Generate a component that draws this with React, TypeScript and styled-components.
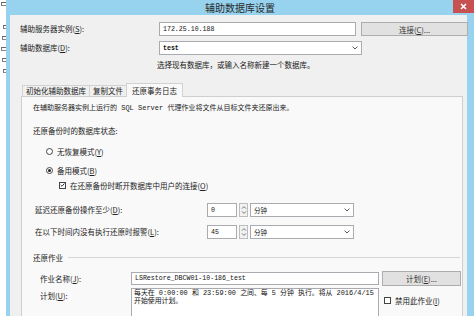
import React from 'react';
import styled, { createGlobalStyle } from 'styled-components';

const GlobalStyle = createGlobalStyle`
  html, body { margin: 0; padding: 0; }
  body {
    background: #fff;
    font-family: "Noto Sans CJK SC", "Liberation Sans", sans-serif;
    color: #222;
  }
  * { box-sizing: border-box; }
`;

const Screen = styled.div`
  display: flex;
  width: 474px;
  height: 316px;
  overflow: hidden;
`;

// bit of the window behind the dialog: only the ends of its text show
const BehindWindow = styled.div`
  width: 6px;
  flex-shrink: 0;
  overflow: hidden;
  background: #fff;
  display: flex;
  flex-direction: column;
  align-items: flex-end;
  padding-top: 2px;
`;

const Scrap = styled.span<{ $w: number; $top: number }>`
  display: block;
  width: ${p => p.$w}px;
  height: 4px;
  margin-top: ${p => p.$top}px;
  border-top: 1px solid #666;
  border-bottom: 1px solid #888;
  border-left: 1px solid #777;
`;

const Window = styled.div`
  flex: 1;
  min-width: 0;
  display: flex;
  flex-direction: column;
  background: #97d2ef;
`;

const TitleBar = styled.div`
  height: 15px;
  flex-shrink: 0;
  display: grid;
  grid-template-columns: 1fr auto 1fr;
  align-items: start;
`;

const Title = styled.div`
  grid-column: 2;
  font-size: 10px;
  line-height: 15px;
  color: #2a2a2a;
`;

const CloseButton = styled.div`
  grid-column: 3;
  justify-self: end;
  width: 21px;
  height: 13px;
  background: #c75050;
  display: flex;
  align-items: center;
  justify-content: center;
`;

const Client = styled.div`
  flex: 1;
  min-height: 0;
  margin: 0 7px 0 4px;
  background: #f0f0f0;
  padding: 7px 4px 0 10px;
  display: flex;
  flex-direction: column;
`;

const FieldRow = styled.div<{ $cols: string; $gap?: number; $top?: number; $indent?: number; $align?: string }>`
  display: grid;
  grid-template-columns: ${p => p.$cols};
  column-gap: ${p => p.$gap ?? 5}px;
  align-items: ${p => p.$align ?? 'center'};
  margin-top: ${p => p.$top ?? 0}px;
  padding-left: ${p => p.$indent ?? 0}px;
`;

const Label = styled.span<{ $top?: number }>`
  font-size: 7.5px;
  line-height: 10px;
  white-space: nowrap;
  margin-top: ${p => p.$top ?? 0}px;
`;

const Key = styled.span`
  text-decoration: underline;
`;

const TextBox = styled.div<{ $h?: number; $bold?: boolean }>`
  height: ${p => p.$h ?? 14}px;
  background: #fff;
  border: 1px solid #a9abb0;
  padding: 0 3px;
  font-family: "Liberation Mono", "Noto Sans CJK SC", monospace;
  font-size: 6.6px;
  font-weight: ${p => (p.$bold ? 700 : 400)};
  display: flex;
  align-items: center;
  justify-content: space-between;
  color: #111;
  white-space: nowrap;
  overflow: hidden;
`;

const PushButton = styled.div<{ $h?: number }>`
  height: ${p => p.$h ?? 14}px;
  background: #e1e1e1;
  border: 1px solid #adadad;
  font-size: 7.5px;
  display: flex;
  align-items: center;
  justify-content: center;
  color: #333;
  white-space: nowrap;
`;

const Hint = styled.div`
  font-size: 7.5px;
  line-height: 9px;
  margin-top: 5px;
  padding-left: 137px;
  white-space: nowrap;
`;

const TabStrip = styled.div`
  position: relative;
  z-index: 1;
  display: flex;
  align-items: flex-end;
  height: 13px;
  margin-top: 14px;
  padding-left: 3px;
`;

const Tab = styled.div<{ $active?: boolean }>`
  font-size: 7.5px;
  line-height: 10px;
  white-space: nowrap;
  height: ${p => (p.$active ? 14 : 11)}px;
  padding: ${p => (p.$active ? '2px 5px 0' : '0 3px')};
  margin-left: -1px;
  margin-bottom: ${p => (p.$active ? -1 : 0)}px;
  border: 1px solid #d2d2d2;
  border-bottom: none;
  background: ${p => (p.$active ? '#f9f9f9' : '#f0f0f0')};
`;

const Panel = styled.div`
  flex: 1;
  min-height: 0;
  margin-left: 1px;
  border: 1px solid #cfcfcf;
  border-bottom: none;
  background: #f9f9f9;
  padding-left: 11px;
  display: flex;
  flex-direction: column;
`;

const PanelText = styled.div<{ $top: number; $mono?: boolean }>`
  margin-top: ${p => p.$top}px;
  font-size: ${p => (p.$mono ? 7 : 7.5)}px;
  font-family: ${p => (p.$mono ? '"Liberation Mono", "Noto Sans CJK SC", monospace' : 'inherit')};
  line-height: 10px;
  white-space: nowrap;
`;

const Choice = styled.div<{ $top: number; $indent: number }>`
  display: flex;
  align-items: center;
  gap: 4px;
  height: 10px;
  margin-top: ${p => p.$top}px;
  padding-left: ${p => p.$indent}px;
  font-size: 7.5px;
  white-space: nowrap;
`;

const RadioDot = styled.span<{ $on?: boolean }>`
  width: 7px;
  height: 7px;
  border-radius: 50%;
  border: 1px solid #444;
  background: #fff;
  display: flex;
  align-items: center;
  justify-content: center;
  &::after{
    content: '';
    width: 3px;
    height: 3px;
    border-radius: 50%;
    background: ${p => (p.$on ? '#222' : 'transparent')};
  }
`;

const CheckBox = styled.span`
  width: 7px;
  height: 7px;
  flex-shrink: 0;
  border: 1px solid #444;
  background: #fff;
  display: flex;
  align-items: center;
  justify-content: center;
`;

const Spinner = styled.div`
  height: 14px;
  border: 1px solid #bdbdbd;
  background: #f2f2f2;
  display: flex;
  align-items: center;
  justify-content: center;
`;

const GroupHeader = styled.div<{ $top: number }>`
  display: flex;
  align-items: center;
  gap: 5px;
  height: 10px;
  margin-top: ${p => p.$top}px;
  padding-right: 2px;
  font-size: 7.5px;
  white-space: nowrap;
  &::after{
    content: '';
    flex: 1;
    height: 1px;
    background: #d6d6d6;
  }
`;

const ScheduleBox = styled.div`
  height: 40px;
  background: #fff;
  border: 1px solid #a9abb0;
  padding: 1px 2px;
  font-family: "Liberation Mono", "Noto Sans CJK SC", monospace;
  font-size: 6.9px;
  line-height: 7.5px;
  color: #111;
  >div{ white-space: nowrap; }
`;

const CheckLine = styled.div`
  display: flex;
  align-items: center;
  gap: 4px;
  margin-top: 7px;
  padding-left: 2px;
  font-size: 7.5px;
  white-space: nowrap;
`;

const Chevron = () => (
  <svg width="6" height="4" viewBox="0 0 6 4">
    <path d="M0.6 0.6 L3 3 L5.4 0.6" fill="none" stroke="#444" strokeWidth="0.9" />
  </svg>
);

const SpinArrows = () => (
  <svg width="6" height="10" viewBox="0 0 6 10">
    <path d="M1 3.6 L3 1.6 L5 3.6" fill="none" stroke="#666" strokeWidth="0.9" />
    <path d="M1 6.4 L3 8.4 L5 6.4" fill="none" stroke="#666" strokeWidth="0.9" />
  </svg>
);

const Tick = () => (
  <svg width="6" height="6" viewBox="0 0 6 6">
    <path d="M0.8 3 L2.4 4.6 L5.2 1.2" fill="none" stroke="#222" strokeWidth="1.1" />
  </svg>
);

const K = ({ t, k, colon = false }: { t: string; k: string; colon?: boolean }) => (
  <>
    {t}(<Key>{k}</Key>){colon ? ':' : ''}
  </>
);

const scraps = [
  { w: 5, top: 0 },
  { w: 3, top: 19 },
  { w: 4, top: 7 },
  { w: 5, top: 7 },
  { w: 4, top: 7 },
  { w: 3, top: 7 },
];

const App = () => {
  return (
    <Screen>
      <GlobalStyle />
      <BehindWindow>
        {scraps.map((s, i) => (
          <Scrap key={i} $w={s.w} $top={s.top} />
        ))}
      </BehindWindow>
      <Window>
        <TitleBar>
          <Title>辅助数据库设置</Title>
          <CloseButton>
            <svg width="7" height="7" viewBox="0 0 7 7">
              <path d="M1 1 L6 6 M6 1 L1 6" stroke="#fff" strokeWidth="1.6" />
            </svg>
          </CloseButton>
        </TitleBar>
        <Client>
          <FieldRow $cols="134px 197px 107px">
            <Label><K t="辅助服务器实例" k="S" colon /></Label>
            <TextBox>172.25.10.188</TextBox>
            <PushButton><K t="连接" k="C" />...</PushButton>
          </FieldRow>
          <FieldRow $cols="134px 203px" $top={5}>
            <Label><K t="辅助数据库" k="D" colon /></Label>
            <TextBox $bold>
              <span>test</span>
              <Chevron />
            </TextBox>
          </FieldRow>
          <Hint>选择现有数据库，或输入名称新建一个数据库。</Hint>

          <TabStrip>
            <Tab>初始化辅助数据库</Tab>
            <Tab>复制文件</Tab>
            <Tab $active>还原事务日志</Tab>
          </TabStrip>
          <Panel>
            <PanelText $top={6} $mono>在辅助服务器实例上运行的 SQL Server 代理作业将文件从目标文件夹还原出来。</PanelText>
            <PanelText $top={13}>还原备份时的数据库状态:</PanelText>
            <Choice $top={10} $indent={13}>
              <RadioDot />
              <span><K t="无恢复模式" k="Y" /></span>
            </Choice>
            <Choice $top={9} $indent={13}>
              <RadioDot $on />
              <span><K t="备用模式" k="B" /></span>
            </Choice>
            <Choice $top={5} $indent={26}>
              <CheckBox><Tick /></CheckBox>
              <span><K t="在还原备份时断开数据库中用户的连接" k="O" /></span>
            </Choice>

            <FieldRow $cols="170px 30px 9px 104px" $gap={2} $top={13} $indent={2}>
              <Label><K t="延迟还原备份操作至少" k="D" colon /></Label>
              <TextBox>0</TextBox>
              <Spinner><SpinArrows /></Spinner>
              <TextBox>
                <span>分钟</span>
                <Chevron />
              </TextBox>
            </FieldRow>
            <FieldRow $cols="170px 30px 9px 104px" $gap={2} $top={8} $indent={2}>
              <Label><K t="在以下时间内没有执行还原时报警" k="L" colon /></Label>
              <TextBox>45</TextBox>
              <Spinner><SpinArrows /></Spinner>
              <TextBox>
                <span>分钟</span>
                <Chevron />
              </TextBox>
            </FieldRow>

            <GroupHeader $top={13}>还原作业</GroupHeader>
            <FieldRow $cols="88px 248px 79px" $gap={3} $top={9} $indent={7}>
              <Label><K t="作业名称" k="J" colon /></Label>
              <TextBox $h={13}>LSRestore_DBCW01-10-186_test</TextBox>
              <PushButton $h={15}><K t="计划" k="E" />...</PushButton>
            </FieldRow>
            <FieldRow $cols="88px 248px 80px" $gap={3} $top={2} $indent={7} $align="start">
              <Label $top={3}><K t="计划" k="U" colon /></Label>
              <ScheduleBox>
                <div>每天在 0:00:00 和 23:59:00 之间、每 5 分钟 执行。将从 2016/4/15</div>
                <div>开始使用计划。</div>
              </ScheduleBox>
              <CheckLine>
                <CheckBox />
                <span><K t="禁用此作业" k="I" /></span>
              </CheckLine>
            </FieldRow>
          </Panel>
        </Client>
      </Window>
    </Screen>
  );
};

export default App;
